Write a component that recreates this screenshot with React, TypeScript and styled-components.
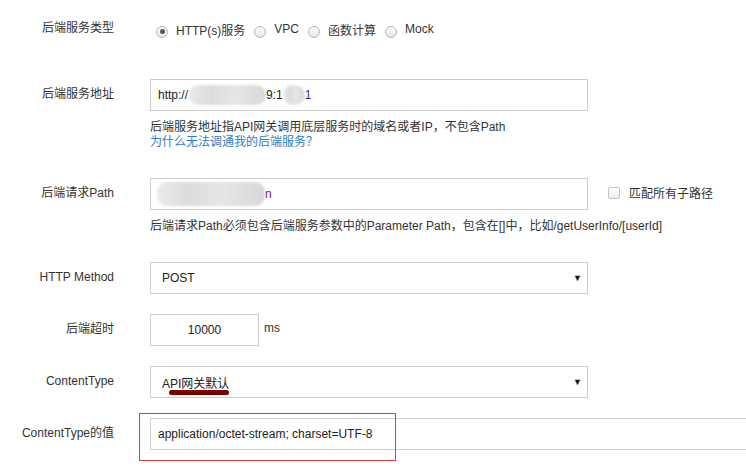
import styled, { createGlobalStyle } from "styled-components";

const GlobalStyle = createGlobalStyle`
  html, body {
    margin: 0;
    padding: 0;
    background: #ffffff;
    overflow: hidden;
  }
  body {
    font-family: "Liberation Sans", "Noto Sans CJK SC", sans-serif;
    font-size: 12px;
    color: #333;
  }
`;

const radios = ["HTTP(s)服务", "VPC", "函数计算", "Mock"];

export default function App() {
  return (
    <>
      <GlobalStyle />
      <Form>
        <Group $space={34}>
          <Label>后端服务类型</Label>
          <Field>
            <RadioRow>
              {radios.map((r, i) => (
                <RadioItem key={r}>
                  <Radio $checked={i === 0} />
                  <span>{r}</span>
                </RadioItem>
              ))}
            </RadioRow>
          </Field>
        </Group>

        <Group>
          <Label>后端服务地址</Label>
          <Field>
            <Input $width={438}>
              http://
              <Blob $width={78} />
              9:1
              <Blob $width={22} />
              <Purple>1</Purple>
            </Input>
            <Help>
              <div>后端服务地址指API网关调用底层服务时的域名或者IP，不包含Path</div>
              <Link>为什么无法调通我的后端服务？</Link>
            </Help>
          </Field>
        </Group>

        <Group>
          <Label>后端请求Path</Label>
          <Field>
            <InlineRow>
              <Input $width={438}>
                <Blob $width={108} $height={24} $offset={-1} />
                <Purple>n</Purple>
              </Input>
              <CheckLabel>
                <Checkbox />
                匹配所有子路径
              </CheckLabel>
            </InlineRow>
            <Help>
              后端请求Path必须包含后端服务参数中的Parameter Path，包含在[]中，比如/getUserInfo/[userId]
            </Help>
          </Field>
        </Group>

        <Group>
          <Label>HTTP Method</Label>
          <Field>
            <Select>
              POST
              <Arrow>▼</Arrow>
            </Select>
          </Field>
        </Group>

        <Group>
          <Label>后端超时</Label>
          <Field>
            <InlineRow>
              <Input $width={109} $center>
                10000
              </Input>
              <Unit>ms</Unit>
            </InlineRow>
          </Field>
        </Group>

        <Group>
          <Label>ContentType</Label>
          <Field>
            <Select>
              API网关默认
              <Arrow>▼</Arrow>
              <Scribble />
            </Select>
          </Field>
        </Group>

        <Group>
          <Label>ContentType的值</Label>
          <Field>
            <Input $width={620}>
              application/octet-stream; charset=UTF-8
              <Highlight />
            </Input>
          </Field>
        </Group>
      </Form>
    </>
  );
}

const Form = styled.div`
  padding-top: 13px;
`;

const Group = styled.div<{ $space?: number }>`
  display: grid;
  grid-template-columns: 114px 1fr;
  column-gap: 36px;
  margin-bottom: ${(p) => p.$space ?? 20}px;
`;

const Label = styled.div`
  text-align: right;
  line-height: 30px;
  color: #333;
  white-space: nowrap;
`;

const Field = styled.div`
  display: flex;
  flex-direction: column;
  align-items: flex-start;
`;

const RadioRow = styled.div`
  display: flex;
  align-items: center;
  height: 32px;
  padding-left: 6px;
  gap: 9px;
`;

const RadioItem = styled.label`
  display: flex;
  align-items: center;
  gap: 8px;
  color: #333;
  font-size: 12px;
`;

const Radio = styled.span<{ $checked?: boolean }>`
  position: relative;
  width: 10px;
  height: 10px;
  margin-top: 5px;
  border-radius: 50%;
  border: 1px solid #b5b5b5;
  background: linear-gradient(#ffffff, #e6e6e6);

  &::after {
    content: "";
    display: ${(p) => (p.$checked ? "block" : "none")};
    position: absolute;
    left: 2.5px;
    top: 2.5px;
    width: 5px;
    height: 5px;
    border-radius: 50%;
    background: #555;
  }
`;

const Input = styled.div<{ $width: number; $center?: boolean }>`
  position: relative;
  box-sizing: border-box;
  width: ${(p) => p.$width}px;
  height: 32px;
  border: 1px solid #cccccc;
  background: #fff;
  padding: 0 7px;
  display: flex;
  align-items: center;
  justify-content: ${(p) => (p.$center ? "center" : "flex-start")};
  color: #222;
  font-size: 12px;
  white-space: nowrap;
`;

const Blob = styled.span<{ $width: number; $height?: number; $offset?: number }>`
  display: inline-block;
  width: ${(p) => p.$width}px;
  height: ${(p) => p.$height ?? 20}px;
  margin-left: ${(p) => p.$offset ?? 0}px;
  border-radius: 10px;
  background: linear-gradient(90deg, #ebebeb, #dcdcdc 30%, #e6e6e6 60%, #d8d8d8);
  filter: blur(0.8px);
`;

const Purple = styled.span`
  color: #5a1a8a;
`;

const Help = styled.div`
  margin-top: 9px;
  margin-bottom: 8px;
  line-height: 15px;
  color: #333;
  white-space: nowrap;
`;

const Link = styled.div`
  color: #2f7cc6;
`;

const InlineRow = styled.div`
  display: flex;
  align-items: center;
`;

const CheckLabel = styled.label`
  display: flex;
  align-items: center;
  gap: 9px;
  margin-left: 20px;
  margin-top: -3px;
  color: #333;
`;

const Checkbox = styled.span`
  width: 10px;
  height: 10px;
  border: 1px solid #c4c4c4;
  border-radius: 2px;
  background: linear-gradient(#ffffff, #ececec);
`;

const Unit = styled.span`
  margin-left: 5px;
  margin-top: -5px;
  color: #333;
`;

const Select = styled.div`
  position: relative;
  box-sizing: border-box;
  width: 438px;
  height: 32px;
  border: 1px solid #cccccc;
  background: #fff;
  padding: 0 11px;
  display: flex;
  align-items: center;
  color: #222;
`;

const Arrow = styled.span`
  position: absolute;
  right: 5px;
  top: 10px;
  font-size: 9px;
  color: #111;
`;

const Scribble = styled.span`
  position: absolute;
  left: 18px;
  top: 23px;
  width: 60px;
  height: 5px;
  border-radius: 3px;
  background: #7a0000;
`;

const Highlight = styled.span`
  position: absolute;
  left: -12px;
  top: -6px;
  width: 257px;
  height: 48px;
  box-sizing: border-box;
  border: 1px solid #e03a3a;
  pointer-events: none;
`;
